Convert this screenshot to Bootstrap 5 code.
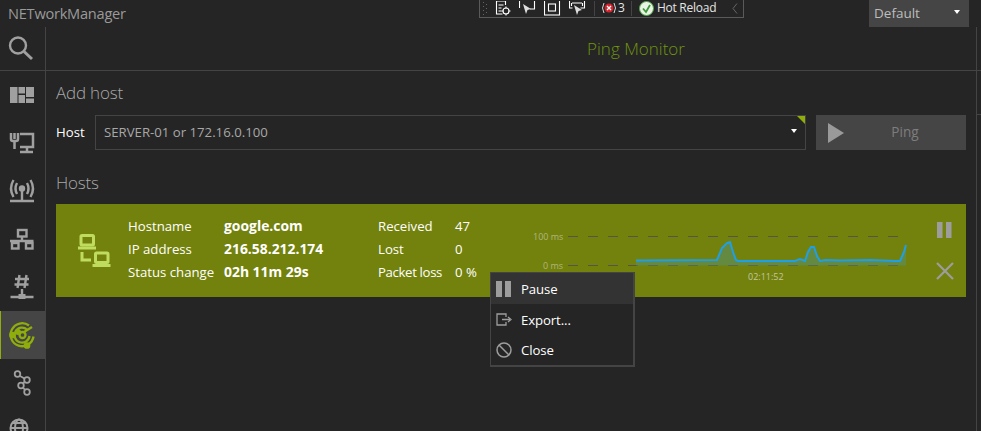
<!DOCTYPE html>
<html lang="en">
<head>
<meta charset="utf-8">
<title>NETworkManager</title>
<link href="https://cdn.jsdelivr.net/npm/bootstrap@5.3.0/dist/css/bootstrap.min.css" rel="stylesheet">
<style>
html,body{height:431px;overflow:hidden;background:#252525;}
body{font-family:"Open Sans","Noto Sans","Liberation Sans",sans-serif;font-size:13.2px;color:#fff;position:relative;}
svg{display:block;flex:none;}
.app-title{height:27px;padding-left:8px;color:#9a9a9a;font-size:14.6px;letter-spacing:-.25px;line-height:15px;}
.theme-pick{width:100px;height:27px;margin-right:12px;background:#454545;color:#bdbdbd;padding:0 5px;font-size:13.5px;}
.tri{width:0;height:0;border-left:3.5px solid transparent;border-right:3.5px solid transparent;border-top:4px solid #fff;}
.dev-bar{position:absolute;left:479px;top:-2px;width:265px;height:20px;border:1px solid #5a5a5a;background:#252525;font-size:12px;color:#e4e4e4;padding-left:3px;white-space:nowrap;}
.dev-sep{width:1px;height:15px;background:#444;}
.grip-a{margin-right:3px;}
.sep-a{margin-left:8px;}
.sep-b{margin-left:6px;}
.ico-a{margin-left:7px;}
.ico-b{margin-left:7px;}
.num-a{margin-left:2px;}
.txt-a{margin-left:3px;letter-spacing:-.25px;}
.chev-a{margin-left:16px;}
.main-row{height:404px;}
.side-rail{width:46px;border-right:1px solid #444;flex:none;}
.side-top{height:44px;border-bottom:1px solid #444;margin-right:-1px;}
.side-item{height:48px;flex:none;}
.side-on{background:#454545;box-shadow:inset 1px 0 0 #8fae0c;}
.work-pane{min-width:0;}
.pane-head{height:44px;border-bottom:1px solid #444;padding-left:250px;color:#6f9410;font-size:17px;font-weight:300;}
.pane-body{padding:0 10px;}
.sect-title{font-size:17px;color:#a8a8a8;font-weight:300;height:22px;line-height:22px;letter-spacing:-.2px;}
.add-head{margin-top:11px;}
.host-row{margin-top:11px;height:35px;}
.host-lbl{width:39px;color:#fff;}
.combo-box{border:1px solid #444;height:35px;padding:0 8px;color:#a8a8a8;position:relative;}
.combo-mark{position:absolute;right:0;top:0;width:0;height:0;border-left:8px solid transparent;border-top:8px solid #8fae0c;}
.ping-btn{width:150px;margin-left:10px;height:35px;background:#454545;color:#7d7d7d;padding-left:12px;}
.ping-txt{width:124px;text-align:center;font-size:13.6px;}
.hosts-head{margin-top:22px;}
.host-card{height:93px;margin-top:10px;background:#73820d;}
.card-ico{width:72px;}
.info-grid{display:grid;grid-template-columns:96px 154px 77px 65px;grid-auto-rows:23px;align-items:center;padding-bottom:2px;}
.info-val{font-weight:700;white-space:nowrap;font-size:13.9px;}
.info-lbl-tight{letter-spacing:-.35px;}
.side-acts{width:51px;padding-left:14px;}
.rail-right{width:5px;border-left:1px solid #444;flex:none;}
.rail-right div{height:44px;border-bottom:1px solid #444;}
.ctx-menu{position:absolute;left:490px;top:272px;width:145px;height:95px;background:#252525;border:2px solid #444;border-left-width:1px;border-top-width:1px;}
.ctx-row{height:31px;padding-left:5px;color:#fff;}
.ctx-row:last-child{height:29px;}
.ctx-row span{margin-left:9px;position:relative;top:1px;letter-spacing:-.1px;}
.ctx-hover{background:#333;}
.chart-txt{font-family:"Open Sans","Noto Sans",sans-serif;font-size:9px;fill:#b0b67e;}
.chart-time{fill:#c3c6a0;}
</style>
</head>
<body>
<div class="d-flex justify-content-between align-items-start">
  <div class="app-title d-flex align-items-center">NETworkManager</div>
  <div class="theme-pick d-flex align-items-center justify-content-between">Default<i class="tri me-1 mb-1"></i></div>
</div>

<div class="dev-bar d-flex align-items-center">
  <svg class="grip-a" width="5" height="15" viewBox="0 0 5 15" fill="#666"><rect width="1" height="1" y="1"/><rect x="3" width="1" height="1" y="3"/><rect width="1" height="1" y="5"/><rect x="3" width="1" height="1" y="7"/><rect width="1" height="1" y="9"/><rect x="3" width="1" height="1" y="11"/><rect width="1" height="1" y="13"/></svg>
  <svg class="ms-1" width="16" height="15" viewBox="0 0 16 15" fill="none" stroke="#fff" stroke-width="1.100"><path d="M1.500 0v13h6M1.500 0h9v4M3.500 4h5M3.500 7h3M3.500 10h3"/><circle cx="11" cy="10" r="3"/><path d="M11 5.500v2M11 12.500v2M6.500 10h2M13.500 10h2"/></svg>
  <svg class="ms-2" width="17" height="15" viewBox="0 0 17 15" fill="none" stroke="#fff" stroke-width="1.100"><path d="M.5 0v7M11 8h4.500V0"/><path d="M4 3l8 5-3.500 1-1.500 4z" fill="#ddd" stroke="none"/></svg>
  <svg class="ms-2" width="17" height="15" viewBox="0 0 17 15" fill="none" stroke="#fff" stroke-width="1.100"><rect x=".5" y="-1" width="15" height="15"/><rect x="4.500" y="3" width="7" height="7"/></svg>
  <svg class="ms-2" width="17" height="15" viewBox="0 0 17 15" fill="none" stroke="#fff" stroke-width="1.100"><path d="M.5 0v7h3M2.500 2v3M15.500 0v7h-4M13.500 2v3M3 2h10"/><path d="M5 4l8 5-3.500 1-1.500 4z" fill="#ddd" stroke="none"/></svg>
  <i class="dev-sep sep-a"></i>
  <svg class="ico-b" width="14" height="15" viewBox="0 0 14 15" fill="none"><circle cx="7" cy="7" r="4.500" fill="#d6222a"/><path d="M5 5l4 4M9 5l-4 4" stroke="#fff" stroke-width="1.300"/><path d="M2 2Q-1 7 2 12M12 2q3 5 0 10" stroke="#ddd"/></svg>
  <span class="num-a">3</span>
  <i class="dev-sep sep-b"></i>
  <svg class="ico-a" width="15" height="15" viewBox="0 0 15 15" fill="none"><circle cx="7.500" cy="7.500" r="7" fill="#eaf4e4" stroke="#4da34a"/><path d="M4 7.500l3 3.500 4-7" stroke="#3c9a3a" stroke-width="1.800"/></svg>
  <span class="txt-a">Hot Reload</span>
  <svg class="chev-a" width="6" height="11" viewBox="0 0 6 11" fill="none" stroke="#666"><path d="M5 .5l-4 5 4 5"/></svg>
</div>

<div class="main-row d-flex">
  <nav class="side-rail d-flex flex-column overflow-hidden">
    <div class="side-top flex-shrink-0">
      <svg width="46" height="43" viewBox="0 0 46 43" fill="none" stroke="#a0a0a0" stroke-width="2.400"><circle cx="18" cy="18.500" r="8"/><path d="M24 24.500l8 7.500" stroke-width="3"/></svg>
    </div>
    <div class="side-item"><svg width="46" height="48" viewBox="0 0 46 48" fill="#a0a0a0"><rect x="10" y="16" width="7.500" height="16"/><rect x="18.500" y="16" width="6.500" height="6.500"/><rect x="18.500" y="24" width="6.500" height="8"/><rect x="26" y="16" width="8" height="10"/><rect x="26" y="27.500" width="8" height="4.500"/></svg></div>
    <div class="side-item"><svg width="46" height="48" viewBox="0 0 46 48" fill="none" stroke="#a0a0a0" stroke-width="2.500"><path d="M11 14v6q0 2 2 2h3q2 0 2-2v-6M14.500 14v6M14.500 22v8"/><path d="M20 15h13v13H20M27 28v4M20 33h13" /></svg></div>
    <div class="side-item"><svg width="46" height="48" viewBox="0 0 46 48" fill="none" stroke="#a0a0a0" stroke-width="2.400"><circle cx="22" cy="21.500" r="2" fill="#a0a0a0"/><path d="M17 16q-3 5.500 0 11M27 16q3 5.500 0 11M13.500 13q-5 8.500 0 17M30.500 13q5 8.500 0 17M22 24v9M10 34h24"/></svg></div>
    <div class="side-item"><svg width="46" height="48" viewBox="0 0 46 48" fill="none" stroke="#a0a0a0" stroke-width="2.400"><rect x="18" y="15" width="8.500" height="6.500"/><rect x="12" y="28" width="6.500" height="5.500"/><rect x="26" y="28" width="6.500" height="5.500"/><path d="M22 22v4M10 26h23.500M15 26v2M29 26v2"/></svg></div>
    <div class="side-item"><svg width="46" height="48" viewBox="0 0 46 48" fill="none" stroke="#a0a0a0" stroke-width="2.400"><path d="M19.500 12l-2 13M26.500 12l-2 13M15 16h14M14.500 21.500h14M10.500 34h23M22 26v6"/><rect x="18.500" y="31" width="7" height="5" fill="#a0a0a0" stroke="none"/></svg></div>
    <div class="side-item side-on"><svg width="46" height="48" viewBox="0 0 46 48" fill="none" stroke="#8fae0c" stroke-width="2.300"><path d="M29 14.500A11.500 11.500 0 1 0 33.500 25.500"/><path d="M27 18.500A7.500 7.500 0 1 0 29.500 25"/><circle cx="22.500" cy="24" r="3"/><path d="M24 21l8-5"/><circle cx="12.500" cy="24" r="2.200" fill="#8fae0c"/><circle cx="27" cy="34.500" r="2.200" fill="#8fae0c"/><circle cx="18" cy="21" r="1.800" fill="#8fae0c"/></svg></div>
    <div class="side-item"><svg width="46" height="48" viewBox="0 0 46 48" fill="none" stroke="#a0a0a0" stroke-width="1.800"><circle cx="17.500" cy="15" r="2.800"/><circle cx="27" cy="21" r="2.800"/><circle cx="21" cy="26.500" r="2.800"/><circle cx="27" cy="33" r="2.800"/><path d="M20 17l4.500 2.500M24.500 23l-1.500 1.500M23 28.500l2 2.500"/></svg></div>
    <div class="side-item"><svg width="46" height="48" viewBox="0 0 46 48" fill="none" stroke="#a0a0a0" stroke-width="2"><circle cx="19" cy="21" r="8.500"/><ellipse cx="19" cy="21" rx="4" ry="8.500"/><path d="M10.500 21h17M12 16h14M12 26h14"/></svg></div>
  </nav>

  <section class="work-pane flex-grow-1 d-flex flex-column">
    <div class="pane-head d-flex align-items-center justify-content-center">Ping Monitor</div>
    <div class="pane-body">
      <div class="sect-title add-head">Add host</div>
      <div class="host-row d-flex align-items-center">
        <div class="host-lbl">Host</div>
        <div class="combo-box flex-grow-1 d-flex align-items-center justify-content-between">SERVER-01 or 172.16.0.100<i class="tri mb-1"></i><i class="combo-mark"></i></div>
        <div class="ping-btn d-flex align-items-center">
          <svg width="16" height="20" viewBox="0 0 16 20" fill="#9a9a9a"><path d="M0 0l16 10L0 20z"/></svg>
          <div class="ping-txt">Ping</div>
        </div>
      </div>
      <div class="sect-title hosts-head">Hosts</div>
      <div class="host-card d-flex align-items-center">
        <div class="card-ico d-flex justify-content-center">
          <svg width="72" height="93" viewBox="56 204 72 93" fill="none" stroke="#bfdc5f" stroke-width="3"><rect x="81" y="235.500" width="12.500" height="9.500" rx="1"/><path d="M78 248h18M82 252v8h9"/><rect x="95.500" y="253" width="12.500" height="9.500" rx="1"/><path d="M92.500 265.500h18"/></svg>
        </div>
        <div class="info-grid">
          <div>Hostname</div><div class="info-val">google.com</div><div>Received</div><div>47</div>
          <div>IP address</div><div class="info-val">216.58.212.174</div><div>Lost</div><div>0</div>
          <div>Status change</div><div class="info-val">02h 11m 29s</div><div class="info-lbl-tight">Packet loss</div><div>0 %</div>
        </div>
        <svg width="392" height="93" viewBox="520 204 392 93" fill="none">
          <text class="chart-txt" x="533" y="240">100 ms</text>
          <text class="chart-txt" x="543" y="269">0 ms</text>
          <path d="M568 236.500H898M568 265.500H898" stroke="#55554a" stroke-width="1" stroke-dasharray="10 10"/>
          <path d="M636 260.500L717 260 722 248 727 243 730 242 733 252 736 260 738 261 795 261 800 259 805 261 808 252 811 247 814 247 817 256 820 261 826 260 840 260.500 870 260 895 261 900 261 904 252 906 245V265.500H636Z" fill="#5f8b52" opacity=".75"/>
          <path d="M636 260.500L717 260 722 248 727 243 730 242 733 252 736 260 738 261 795 261 800 259 805 261 808 252 811 247 814 247 817 256 820 261 826 260 840 260.500 870 260 895 261 900 261 904 252 906 245" stroke="#1e9fe8" stroke-width="2"/>
          <text class="chart-txt chart-time" x="748" y="280">02:11:52</text>
        </svg>
        <div class="side-acts d-flex flex-column align-items-center gap-4">
          <svg width="15" height="16" viewBox="0 0 15 16" fill="#9d9d9d"><rect width="5.500" height="16"/><rect x="9" width="5.500" height="16"/></svg>
          <svg width="18" height="18" viewBox="0 0 18 18" stroke="#9d9d9d" stroke-width="2.200"><path d="M1 1l16 16M17 1L1 17"/></svg>
        </div>
      </div>
    </div>
  </section>
  <div class="rail-right"><div></div><div></div></div>
</div>

<div class="ctx-menu">
  <div class="ctx-row ctx-hover d-flex align-items-center"><svg width="16" height="16" viewBox="0 0 16 16" fill="#9d9d9d"><rect width="6" height="16"/><rect x="9" width="6" height="16"/></svg><span>Pause</span></div>
  <div class="ctx-row d-flex align-items-center"><svg width="16" height="16" viewBox="0 0 16 16" fill="none" stroke="#9d9d9d" stroke-width="1.300"><path d="M10 5V2H1v11h9v-3M6 7.500h8M12 5l3 2.500-3 2.500"/></svg><span>Export...</span></div>
  <div class="ctx-row d-flex align-items-center"><svg width="16" height="16" viewBox="0 0 16 16" fill="none" stroke="#9d9d9d" stroke-width="1.500"><circle cx="8" cy="8" r="7"/><path d="M3 3l10 10"/></svg><span>Close</span></div>
</div>
</body>
</html>
